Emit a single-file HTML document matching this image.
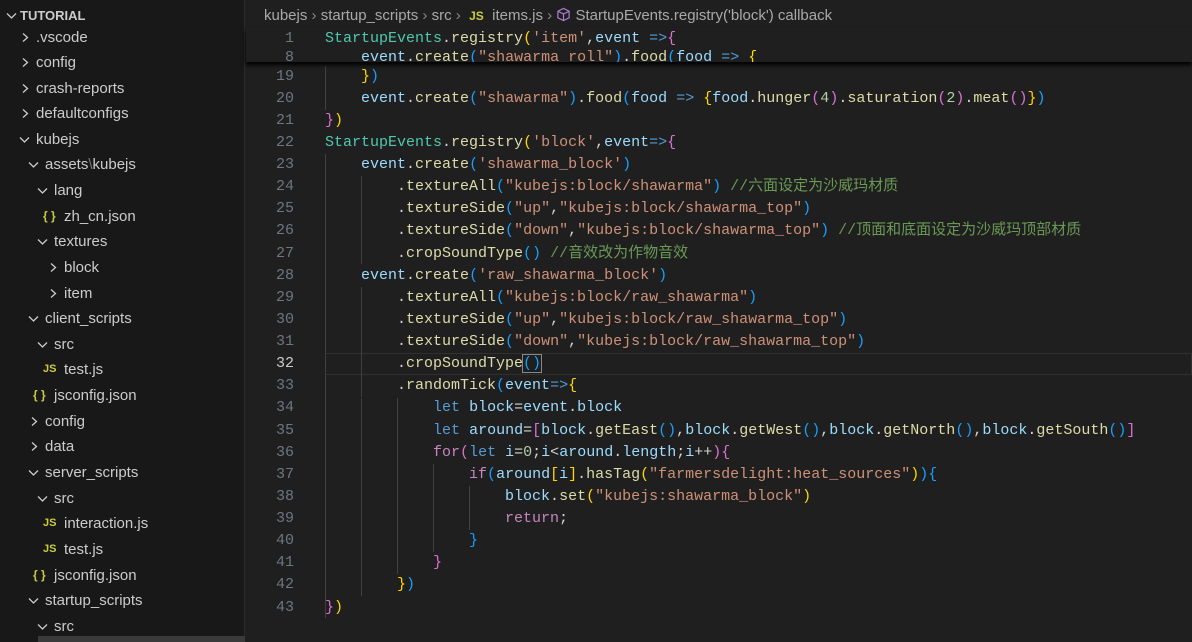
<!DOCTYPE html>
<html><head><meta charset="utf-8"><style>
*{margin:0;padding:0;box-sizing:border-box}
body{width:1192px;height:642px;overflow:hidden;background:#1f1f1f;font-family:"Liberation Sans","Noto Sans CJK SC",sans-serif;position:relative}
#side{position:absolute;left:0;top:0;width:245px;height:642px;background:#181818;border-right:1px solid #2b2b2b;color:#cccccc;font-size:15px}
.it{position:absolute;height:25px;line-height:25px;white-space:nowrap}
.ch{position:absolute;top:7px;width:11px;height:11px}
.js{color:#cbcb41;font-weight:bold;font-size:11px;position:absolute;top:0}
.jn{color:#cbcb41;font-weight:bold;font-size:12px;position:absolute;top:0}
#bc{position:absolute;left:246px;top:1px;height:28px;right:0;color:#a9a9a9;font-size:15px;line-height:30px;padding-left:18px;white-space:nowrap}
#code{position:absolute;left:246px;top:65.5px;right:0;font-family:"Liberation Mono","Noto Sans CJK SC",monospace;font-size:15px;color:#d4d4d4}
.ln{position:absolute;height:22.125px;line-height:22.125px;white-space:pre}
.num{position:absolute;width:48px;text-align:right;color:#6e7681;font-size:15px}
.tx{position:absolute;left:79px}
.k{color:#4ec9b0}.f{color:#dcdcaa}.s{color:#ce9178}.v{color:#9cdcfe}.b1{color:#ffd700}.b2{color:#da70d6}.b3{color:#179fff}.kw{color:#569cd6}.c{color:#c586c0}.n{color:#b5cea8}.cm{color:#6a9955}.o{color:#d4d4d4}
.g{position:absolute;width:1px;background:#404040}
#sticky{position:absolute;left:246px;top:28px;right:0;height:34px;background:#1f1f1f;overflow:hidden;font-family:"Liberation Mono",monospace;font-size:15px;color:#d4d4d4;box-shadow:0 3px 4px #000;z-index:2}
</style></head><body>
<div id="side">
<div class="it" style="left:6px;top:3px;font-size:13px;font-weight:bold;color:#cccccc"><svg width="11" height="11" style="position:absolute;left:0;top:7px" viewBox="0 0 11 11"><path d="M1 3.5L5.5 8L10 3.5" stroke="#ccc" fill="none" stroke-width="1.3"/></svg><span style="position:absolute;left:14px">TUTORIAL</span></div>
<div id="items"></div>
<div style="position:absolute;left:38px;top:636px;width:207px;height:6px;background:#3a3a3a"></div>
</div>
<div id="bc">kubejs <span style="color:#888">›</span> startup_scripts <span style="color:#888">›</span> src <span style="color:#888">›</span> &nbsp;<span style="color:#cbcb41;font-weight:bold;font-size:12px">JS</span>&nbsp; items.js <span style="color:#888">›</span> <svg width="15" height="15" viewBox="0 0 16 16" style="vertical-align:-2px"><path d="M8 1.5L14 4.5V11.5L8 14.5L2 11.5V4.5Z M2 4.5L8 7.5L14 4.5 M8 7.5V14.5" stroke="#b180d7" fill="none" stroke-width="1.2"/></svg> StartupEvents.registry('block') callback</div>
<div id="sticky">
<div class="ln" style="top:0px;left:0;right:0"><span class="num" style="left:0">1</span><span class="tx"><span class="k">StartupEvents</span>.<span class="f">registry</span><span class="b1">(</span><span class="s">'item'</span>,<span class="v">event</span> <span class="kw">=&gt;</span><span class="b2">{</span></span></div>
<div class="ln" style="top:19px;left:0;right:0"><span class="num" style="left:0">8</span><span class="tx">    <span class="v">event</span>.<span class="f">create</span><span class="b3">(</span><span class="s">"shawarma_roll"</span><span class="b3">)</span>.<span class="f">food</span><span class="b3">(</span><span class="v">food</span> <span class="kw">=&gt;</span> <span class="b1">{</span></span></div>
</div>
<div id="code">
<div style="position:absolute;left:79px;top:287px;right:0;height:22px;border:1px solid #303030"></div>
<div class="g" style="left:79px;top:0;height:44px"></div>
<div class="g" style="left:79px;top:88px;height:464px"></div>
<div class="g" style="left:115px;top:110px;height:88px"></div>
<div class="g" style="left:115px;top:221px;height:110px"></div>
<div class="g" style="left:115px;top:332px;height:198px"></div>
<div class="g" style="left:151px;top:332px;height:176px"></div>
<div class="g" style="left:187px;top:398px;height:88px"></div>
<div class="g" style="left:223px;top:420px;height:44px"></div>
<div id="lines"></div>
</div>
<script>
const L=[
[19,'    <span class="b1">}</span><span class="b3">)</span>'],
[20,'    <span class="v">event</span>.<span class="f">create</span><span class="b3">(</span><span class="s">"shawarma"</span><span class="b3">)</span>.<span class="f">food</span><span class="b3">(</span><span class="v">food</span> <span class="kw">=&gt;</span> <span class="b1">{</span><span class="v">food</span>.<span class="f">hunger</span><span class="b2">(</span><span class="n">4</span><span class="b2">)</span>.<span class="f">saturation</span><span class="b2">(</span><span class="n">2</span><span class="b2">)</span>.<span class="f">meat</span><span class="b2">()</span><span class="b1">}</span><span class="b3">)</span>'],
[21,'<span class="b2">}</span><span class="b1">)</span>'],
[22,'<span class="k">StartupEvents</span>.<span class="f">registry</span><span class="b1">(</span><span class="s">\'block\'</span>,<span class="v">event</span><span class="kw">=&gt;</span><span class="b2">{</span>'],
[23,'    <span class="v">event</span>.<span class="f">create</span><span class="b3">(</span><span class="s">\'shawarma_block\'</span><span class="b3">)</span>'],
[24,'        .<span class="f">textureAll</span><span class="b3">(</span><span class="s">"kubejs:block/shawarma"</span><span class="b3">)</span> <span class="cm">//六面设定为沙威玛材质</span>'],
[25,'        .<span class="f">textureSide</span><span class="b3">(</span><span class="s">"up"</span>,<span class="s">"kubejs:block/shawarma_top"</span><span class="b3">)</span>'],
[26,'        .<span class="f">textureSide</span><span class="b3">(</span><span class="s">"down"</span>,<span class="s">"kubejs:block/shawarma_top"</span><span class="b3">)</span> <span class="cm">//顶面和底面设定为沙威玛顶部材质</span>'],
[27,'        .<span class="f">cropSoundType</span><span class="b3">()</span> <span class="cm">//音效改为作物音效</span>'],
[28,'    <span class="v">event</span>.<span class="f">create</span><span class="b3">(</span><span class="s">\'raw_shawarma_block\'</span><span class="b3">)</span>'],
[29,'        .<span class="f">textureAll</span><span class="b3">(</span><span class="s">"kubejs:block/raw_shawarma"</span><span class="b3">)</span>'],
[30,'        .<span class="f">textureSide</span><span class="b3">(</span><span class="s">"up"</span>,<span class="s">"kubejs:block/raw_shawarma_top"</span><span class="b3">)</span>'],
[31,'        .<span class="f">textureSide</span><span class="b3">(</span><span class="s">"down"</span>,<span class="s">"kubejs:block/raw_shawarma_top"</span><span class="b3">)</span>'],
[32,'        .<span class="f">cropSoundType</span><span class="b3" style="outline:1px solid #888">()</span>'],
[33,'        .<span class="f">randomTick</span><span class="b3">(</span><span class="v">event</span><span class="kw">=&gt;</span><span class="b1">{</span>'],
[34,'            <span class="kw">let</span> <span class="v">block</span>=<span class="v">event</span>.<span class="v">block</span>'],
[35,'            <span class="kw">let</span> <span class="v">around</span>=<span class="b2">[</span><span class="v">block</span>.<span class="f">getEast</span><span class="b3">()</span>,<span class="v">block</span>.<span class="f">getWest</span><span class="b3">()</span>,<span class="v">block</span>.<span class="f">getNorth</span><span class="b3">()</span>,<span class="v">block</span>.<span class="f">getSouth</span><span class="b3">()</span><span class="b2">]</span>'],
[36,'            <span class="c">for</span><span class="b2">(</span><span class="kw">let</span> <span class="v">i</span>=<span class="n">0</span>;<span class="v">i</span>&lt;<span class="v">around</span>.<span class="v">length</span>;<span class="v">i</span>++<span class="b2">){</span>'],
[37,'                <span class="c">if</span><span class="b3">(</span><span class="v">around</span><span class="b1">[</span><span class="v">i</span><span class="b1">]</span>.<span class="f">hasTag</span><span class="b1">(</span><span class="s">"farmersdelight:heat_sources"</span><span class="b1">)</span><span class="b3">){</span>'],
[38,'                    <span class="v">block</span>.<span class="f">set</span><span class="b1">(</span><span class="s">"kubejs:shawarma_block"</span><span class="b1">)</span>'],
[39,'                    <span class="c">return</span>;'],
[40,'                <span class="b3">}</span>'],
[41,'            <span class="b2">}</span>'],
[42,'        <span class="b1">}</span><span class="b3">)</span>'],
[43,'<span class="b2">}</span><span class="b1">)</span>']];
let h='';
L.forEach(([n,t])=>{h+=`<div class="ln" style="top:${(n-19)*22.125}px;left:0;right:0"><span class="num" style="left:0;${n==32?'color:#ccc':''}">${n}</span><span class="tx">${t}</span></div>`});
document.getElementById('lines').innerHTML=h;
const R='<path d="M4 1.5L8.5 5.5L4 9.5" stroke="#ccc" fill="none" stroke-width="1.3"/>',D='<path d="M1 3.5L5.5 8L10 3.5" stroke="#ccc" fill="none" stroke-width="1.3"/>';
const S=[['.vscode',36,'r',36],['config',61,'r',36],['crash-reports',87,'r',36],['defaultconfigs',112,'r',36],['kubejs',138,'d',36],['assets<span style="color:#777">\\</span>kubejs',163,'d',45],['lang',189,'d',54],['zh_cn.json',215,'j',64],['textures',240,'d',54],['block',266,'r',64],['item',292,'r',64],['client_scripts',317,'d',45],['src',343,'d',54],['test.js',368,'s',64],['jsconfig.json',394,'j',54],['config',420,'r',45],['data',445,'r',45],['server_scripts',471,'d',45],['src',497,'d',54],['interaction.js',522,'s',64],['test.js',548,'s',64],['jsconfig.json',574,'j',54],['startup_scripts',599,'d',45],['src',625,'d',54]];
let s='';
S.forEach(([t,y,k,x])=>{let ic='';
if(k=='r'||k=='d')ic=`<svg class="ch" style="left:${x-17}px" viewBox="0 0 11 11">${k=='r'?R:D}</svg>`;
else if(k=='j')ic=`<span class="jn" style="left:${x-21}px">{ }</span>`;
else ic=`<span class="js" style="left:${x-21}px">JS</span>`;
s+=`<div class="it" style="left:0;top:${y-11}px;width:245px">${ic}<span style="position:absolute;left:${x}px">${t}</span></div>`});
document.getElementById('items').innerHTML=s;
</script>
</body></html>
